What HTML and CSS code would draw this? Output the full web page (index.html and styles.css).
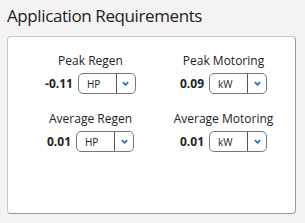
FILE: index.html
```html
<!DOCTYPE html>
<html lang="en">
<head>
    <meta charset="UTF-8">
    <meta name="viewport" content="width=device-width, initial-scale=1.0">
    <title>Application Requirements</title>
    <link rel="stylesheet" href="styles.css">
</head>
<body>
    <section class="req">
        <h1>Application Requirements</h1>
        <div class="panel">
            <div class="item">
                <p class="label">Peak Regen</p>
                <div class="row">
                    <span class="val">-0.11</span>
                    <div class="unit"><span>HP</span><i class="arrow"><svg viewBox="0 0 10 10" width="9" height="9"><path d="M2 3.5 L5 6.5 L8 3.5" fill="none" stroke="#1f6fb2" stroke-width="1.8"/></svg></i></div>
                </div>
            </div>
            <div class="item">
                <p class="label">Peak Motoring</p>
                <div class="row">
                    <span class="val">0.09</span>
                    <div class="unit"><span>kW</span><i class="arrow"><svg viewBox="0 0 10 10" width="9" height="9"><path d="M2 3.5 L5 6.5 L8 3.5" fill="none" stroke="#1f6fb2" stroke-width="1.8"/></svg></i></div>
                </div>
            </div>
            <div class="item">
                <p class="label">Average Regen</p>
                <div class="row">
                    <span class="val">0.01</span>
                    <div class="unit"><span>HP</span><i class="arrow"><svg viewBox="0 0 10 10" width="9" height="9"><path d="M2 3.5 L5 6.5 L8 3.5" fill="none" stroke="#1f6fb2" stroke-width="1.8"/></svg></i></div>
                </div>
            </div>
            <div class="item">
                <p class="label">Average Motoring</p>
                <div class="row">
                    <span class="val">0.01</span>
                    <div class="unit"><span>kW</span><i class="arrow"><svg viewBox="0 0 10 10" width="9" height="9"><path d="M2 3.5 L5 6.5 L8 3.5" fill="none" stroke="#1f6fb2" stroke-width="1.8"/></svg></i></div>
                </div>
            </div>
        </div>
    </section>
</body>
</html>
```

FILE: styles.css
```css
body, html{ width:100%; height:100%; }
body, h1, p, div{ margin:0; padding:0; }
body{
    font-family: "Open Sans", "Noto Sans", sans-serif;
    color:#222;
    background:#f4f2f2;
}
.req{ padding:4px 9px 0 7px; }
.req > h1{
    font-size:17px; font-weight:normal; line-height:24px;
    margin:0 0 8px 0; letter-spacing:-0.4px;
}
.panel{
    height:178px;
    background:#fff;
    border:1px solid #c9c9c9;
    border-right-color:#999; border-bottom-color:#999;
    border-radius:4px;
    display:grid;
    grid-template-columns:133px 133px;
    grid-auto-rows:58px;
    padding:15px 0 0 16px;
    box-sizing:border-box;
}
.item{ display:flex; flex-flow:column nowrap; align-items:center; }
.label{ font-size:12px; line-height:18px; margin-bottom:3px; }
.row{ display:flex; align-items:center; gap:5px; }
.val{ font-size:12px; font-weight:bold; }
.unit{
    width:56px; height:19px;
    border:1px solid #777; border-radius:5px;
    display:flex; align-items:center;
    font-size:10px;
}
.unit > span{ flex:1; padding-left:8px; }
.arrow{
    width:18px; height:100%;
    border-left:1px solid #555;
    display:flex; align-items:center; justify-content:center;
}
.arrow > svg{ display:block; }
```
